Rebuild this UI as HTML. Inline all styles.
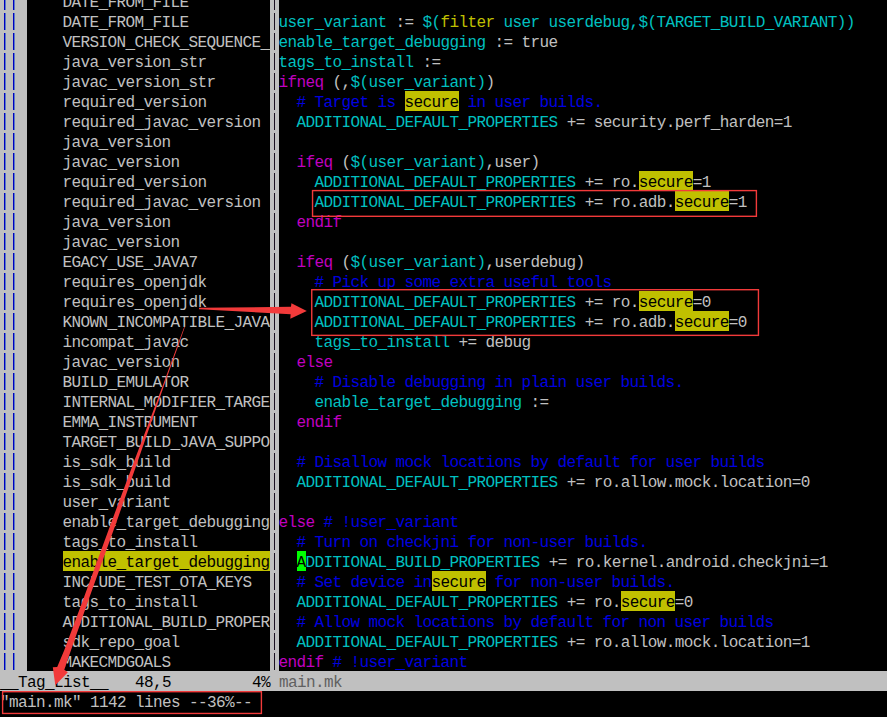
<!DOCTYPE html>
<html><head><meta charset="utf-8"><style>
html,body{margin:0;padding:0;background:#000;width:887px;height:717px;overflow:hidden;position:relative}
.r{position:absolute;white-space:pre;font-family:"Liberation Mono",monospace;font-size:16px;line-height:24px;height:20px;letter-spacing:-0.6px}
.tg{left:62.5px;color:#c0c0c0}
.hlrow{background:#c0c000;color:#000;width:207px}
.mn{left:278.5px;color:#c0c0c0}
.g{color:#c0c0c0} .c{color:#00c0c0} .m{color:#c000c0} .b{color:#0000e0} .y{color:#c0c000}
.hl{background:#c0c000;color:#000;display:inline-block;height:20px;vertical-align:top;line-height:24px}
.cur{background:#00ff00;color:#000;display:inline-block;height:20px;vertical-align:top;line-height:24px}
.fold{position:absolute;left:0;top:0;width:27px;height:671px;background:#c0c0c0}
.dash{position:absolute;top:-9px;height:680px;width:1px;background:repeating-linear-gradient(to bottom,transparent 0,transparent 2px,var(--dc) 2px,var(--dc) 19px,transparent 19px,transparent 20px)}
.sep{position:absolute;left:270px;top:0;width:9px;height:671px;background:#c0c0c0}
.status{position:absolute;left:0;top:671px;width:887px;height:20px;background:#c0c0c0}
.ann{position:absolute;left:0;top:0}
s{text-decoration:none;position:relative;top:1px}
</style></head>
<body>
<div class="fold">
<div class="dash" style="left:4px;--dc:#0000c0"></div><div class="dash" style="left:5px;--dc:#5a7ac8"></div>
<div class="dash" style="left:13px;--dc:#0000c0"></div><div class="dash" style="left:14px;--dc:#5a7ac8"></div>
</div>
<div class="sep"><div class="dash" style="left:4px;--dc:#1a1020"></div></div>
<div class="status"></div>
<div class="r" style="left:0;top:671px;color:#000"><s>__</s>Tag<s>_</s>List<s>__</s>   48,5         4%</div>
<div class="r" style="left:279px;top:671px;color:#606060">main.mk</div>
<div class="r" style="left:0;top:691px;color:#c0c0c0">"main.mk" 1142 lines --36%--</div>
<div class="r tg" style="top:-9px">DATE<s>_</s>FROM<s>_</s>FILE</div>
<div class="r tg" style="top:11px">DATE<s>_</s>FROM<s>_</s>FILE</div>
<div class="r tg" style="top:31px">VERSION<s>_</s>CHECK<s>_</s>SEQUENCE<s>_</s></div>
<div class="r tg" style="top:51px">java<s>_</s>version<s>_</s>str</div>
<div class="r tg" style="top:71px">javac<s>_</s>version<s>_</s>str</div>
<div class="r tg" style="top:91px">required<s>_</s>version</div>
<div class="r tg" style="top:111px">required<s>_</s>javac<s>_</s>version</div>
<div class="r tg" style="top:131px">java<s>_</s>version</div>
<div class="r tg" style="top:151px">javac<s>_</s>version</div>
<div class="r tg" style="top:171px">required<s>_</s>version</div>
<div class="r tg" style="top:191px">required<s>_</s>javac<s>_</s>version</div>
<div class="r tg" style="top:211px">java<s>_</s>version</div>
<div class="r tg" style="top:231px">javac<s>_</s>version</div>
<div class="r tg" style="top:251px">EGACY<s>_</s>USE<s>_</s>JAVA7</div>
<div class="r tg" style="top:271px">requires<s>_</s>openjdk</div>
<div class="r tg" style="top:291px">requires<s>_</s>openjdk</div>
<div class="r tg" style="top:311px">KNOWN<s>_</s>INCOMPATIBLE<s>_</s>JAVA</div>
<div class="r tg" style="top:331px">incompat<s>_</s>javac</div>
<div class="r tg" style="top:351px">javac<s>_</s>version</div>
<div class="r tg" style="top:371px">BUILD<s>_</s>EMULATOR</div>
<div class="r tg" style="top:391px">INTERNAL<s>_</s>MODIFIER<s>_</s>TARGE</div>
<div class="r tg" style="top:411px">EMMA<s>_</s>INSTRUMENT</div>
<div class="r tg" style="top:431px">TARGET<s>_</s>BUILD<s>_</s>JAVA<s>_</s>SUPPO</div>
<div class="r tg" style="top:451px">is<s>_</s>sdk<s>_</s>build</div>
<div class="r tg" style="top:471px">is<s>_</s>sdk<s>_</s>build</div>
<div class="r tg" style="top:491px">user<s>_</s>variant</div>
<div class="r tg" style="top:511px">enable<s>_</s>target<s>_</s>debugging</div>
<div class="r tg" style="top:531px">tags<s>_</s>to<s>_</s>install</div>
<div class="r tg hlrow" style="top:551px">enable<s>_</s>target<s>_</s>debugging</div>
<div class="r tg" style="top:571px">INCLUDE<s>_</s>TEST<s>_</s>OTA<s>_</s>KEYS</div>
<div class="r tg" style="top:591px">tags<s>_</s>to<s>_</s>install</div>
<div class="r tg" style="top:611px">ADDITIONAL<s>_</s>BUILD<s>_</s>PROPER</div>
<div class="r tg" style="top:631px">sdk<s>_</s>repo<s>_</s>goal</div>
<div class="r tg" style="top:651px">MAKECMDGOALS</div>
<div class="r mn" style="top:11px"><span class="c">user<s>_</s>variant</span><span class="g"> := </span><span class="c">$(</span><span class="y">filter</span><span class="c"> user userdebug,$(TARGET<s>_</s>BUILD<s>_</s>VARIANT))</span></div>
<div class="r mn" style="top:31px"><span class="c">enable<s>_</s>target<s>_</s>debugging</span><span class="g"> := true</span></div>
<div class="r mn" style="top:51px"><span class="c">tags<s>_</s>to<s>_</s>install</span><span class="g"> :=</span></div>
<div class="r mn" style="top:71px"><span class="m">ifneq</span><span class="g"> (,</span><span class="c">$(user<s>_</s>variant)</span><span class="g">)</span></div>
<div class="r mn" style="top:91px"><span class="g">  </span><span class="b"># Target is </span><span class="hl">secure</span><span class="b"> in user builds.</span></div>
<div class="r mn" style="top:111px"><span class="g">  </span><span class="c">ADDITIONAL<s>_</s>DEFAULT<s>_</s>PROPERTIES</span><span class="g"> += security.perf<s>_</s>harden=1</span></div>
<div class="r mn" style="top:151px"><span class="g">  </span><span class="m">ifeq</span><span class="g"> (</span><span class="c">$(user<s>_</s>variant)</span><span class="g">,user)</span></div>
<div class="r mn" style="top:171px"><span class="g">    </span><span class="c">ADDITIONAL<s>_</s>DEFAULT<s>_</s>PROPERTIES</span><span class="g"> += ro.</span><span class="hl">secure</span><span class="g">=1</span></div>
<div class="r mn" style="top:191px"><span class="g">    </span><span class="c">ADDITIONAL<s>_</s>DEFAULT<s>_</s>PROPERTIES</span><span class="g"> += ro.adb.</span><span class="hl">secure</span><span class="g">=1</span></div>
<div class="r mn" style="top:211px"><span class="g">  </span><span class="m">endif</span></div>
<div class="r mn" style="top:251px"><span class="g">  </span><span class="m">ifeq</span><span class="g"> (</span><span class="c">$(user<s>_</s>variant)</span><span class="g">,userdebug)</span></div>
<div class="r mn" style="top:271px"><span class="g">    </span><span class="b"># Pick up some extra useful tools</span></div>
<div class="r mn" style="top:291px"><span class="g">    </span><span class="c">ADDITIONAL<s>_</s>DEFAULT<s>_</s>PROPERTIES</span><span class="g"> += ro.</span><span class="hl">secure</span><span class="g">=0</span></div>
<div class="r mn" style="top:311px"><span class="g">    </span><span class="c">ADDITIONAL<s>_</s>DEFAULT<s>_</s>PROPERTIES</span><span class="g"> += ro.adb.</span><span class="hl">secure</span><span class="g">=0</span></div>
<div class="r mn" style="top:331px"><span class="g">    </span><span class="c">tags<s>_</s>to<s>_</s>install</span><span class="g"> += debug</span></div>
<div class="r mn" style="top:351px"><span class="g">  </span><span class="m">else</span></div>
<div class="r mn" style="top:371px"><span class="g">    </span><span class="b"># Disable debugging in plain user builds.</span></div>
<div class="r mn" style="top:391px"><span class="g">    </span><span class="c">enable<s>_</s>target<s>_</s>debugging</span><span class="g"> :=</span></div>
<div class="r mn" style="top:411px"><span class="g">  </span><span class="m">endif</span></div>
<div class="r mn" style="top:451px"><span class="g">  </span><span class="b"># Disallow mock locations by default for user builds</span></div>
<div class="r mn" style="top:471px"><span class="g">  </span><span class="c">ADDITIONAL<s>_</s>DEFAULT<s>_</s>PROPERTIES</span><span class="g"> += ro.allow.mock.location=0</span></div>
<div class="r mn" style="top:511px"><span class="m">else</span><span class="b"> # !user<s>_</s>variant</span></div>
<div class="r mn" style="top:531px"><span class="g">  </span><span class="b"># Turn on checkjni for non-user builds.</span></div>
<div class="r mn" style="top:551px"><span class="g">  </span><span class="cur">A</span><span class="c">DDITIONAL<s>_</s>BUILD<s>_</s>PROPERTIES</span><span class="g"> += ro.kernel.android.checkjni=1</span></div>
<div class="r mn" style="top:571px"><span class="g">  </span><span class="b"># Set device in</span><span class="hl">secure</span><span class="b"> for non-user builds.</span></div>
<div class="r mn" style="top:591px"><span class="g">  </span><span class="c">ADDITIONAL<s>_</s>DEFAULT<s>_</s>PROPERTIES</span><span class="g"> += ro.</span><span class="hl">secure</span><span class="g">=0</span></div>
<div class="r mn" style="top:611px"><span class="g">  </span><span class="b"># Allow mock locations by default for non user builds</span></div>
<div class="r mn" style="top:631px"><span class="g">  </span><span class="c">ADDITIONAL<s>_</s>DEFAULT<s>_</s>PROPERTIES</span><span class="g"> += ro.allow.mock.location=1</span></div>
<div class="r mn" style="top:651px"><span class="m">endif</span><span class="b"> # !user<s>_</s>variant</span></div>
<svg class="ann" width="887" height="717" viewBox="0 0 887 717">
<g fill="none" stroke="#f23a3a" stroke-width="1.4">
<rect x="312.55" y="190.6" width="443.85" height="25.7"/>
<rect x="311.75" y="289.7" width="446.7" height="45.65"/>
<rect x="2.6" y="691.7" width="258.8" height="21.75"/>
</g>
<g fill="#f23a3a">
<polygon points="199,307.8 291,306.8 291.4,303.2 306.8,311.1 290.3,318.7 290.6,314.2 199,309.2"/>
<polygon points="184.9,326.8 178.2,346 166.0,380 152.0,420 138.2,460 117.2,520 102.85,560 88.5,600 71.05,650 64.3,669.8 67.9,672.3 55.3,685.2 52.8,667.3 57.2,667.0 64.35,650 83.0,600 97.55,560 112.2,520 134.6,460 149.8,420 164.8,380 177.2,346 184.3,326.8"/>
</g>
</svg>
</body></html>
